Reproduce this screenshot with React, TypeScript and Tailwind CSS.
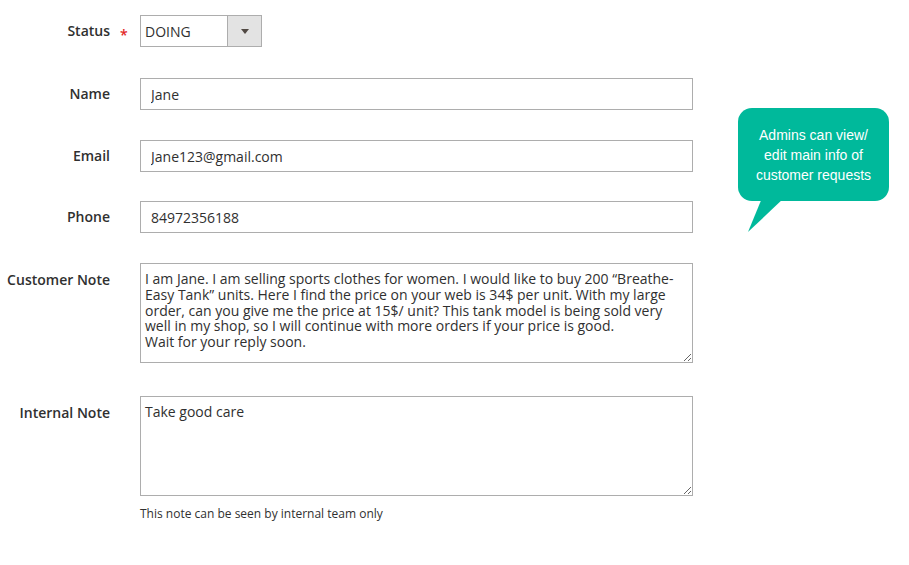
import React from "react";

const labelCls =
  "w-[110px] shrink-0 text-right text-[14px] font-semibold text-[#303030] leading-[20px]";
const inputCls =
  "h-[32px] w-[553px] border border-[#adadad] bg-white px-[10px] text-[14px] text-[#303030] outline-none";
const areaCls =
  "h-[100px] w-[553px] border border-[#adadad] bg-white px-[4px] pt-[7px] text-[14px] leading-[15.8px] text-[#303030] outline-none resize";

export default function App() {
  return (
    <div
      className="relative h-[565px] w-[909px] bg-white"
      style={{ fontFamily: '"Open Sans", sans-serif' }}
    >
      <div className="flex flex-col pt-[15px]">
        <div className="flex items-center">
          <div className={labelCls + " relative"}>
            Status
            <span className="absolute left-[120px] top-[4px] text-[14px] text-[#e22626]">*</span>
          </div>
          <div className="ml-[30px] flex h-[32px] w-[122px] border border-[#adadad] bg-white">
            <div className="flex flex-1 items-center pl-[4px] text-[14px] text-[#303030]">DOING</div>
            <div className="flex w-[34px] items-center justify-center border-l border-[#adadad] bg-[#e3e3e3]">
              <svg width="8" height="5" viewBox="0 0 8 5">
                <polygon points="0,0 8,0 4,5" fill="#514943" />
              </svg>
            </div>
          </div>
        </div>

        <div className="mt-[31px] flex items-center">
          <div className={labelCls}>Name</div>
          <input className={"ml-[30px] " + inputCls} defaultValue="Jane" />
        </div>

        <div className="mt-[30px] flex items-center">
          <div className={labelCls}>Email</div>
          <input className={"ml-[30px] " + inputCls} defaultValue="Jane123@gmail.com" />
        </div>

        <div className="mt-[29px] flex items-center">
          <div className={labelCls}>Phone</div>
          <input className={"ml-[30px] " + inputCls} defaultValue="84972356188" />
        </div>

        <div className="mt-[30px] flex items-start">
          <div className={labelCls + " pt-[7px]"}>Customer Note</div>
          <textarea
            className={"ml-[30px] " + areaCls}
            defaultValue={
              "I am Jane. I am selling sports clothes for women. I would like to buy 200 \u201cBreathe-Easy Tank\u201d units. Here I find the price on your web is 34$ per unit. With my large order, can you give me the price at 15$/ unit? This tank model is being sold very well in my shop, so I will continue with more orders if your price is good.\nWait for your reply soon."
            }
          />
        </div>

        <div className="mt-[33px] flex items-start">
          <div className={labelCls + " pt-[7px]"}>Internal Note</div>
          <div className="ml-[30px] flex flex-col">
            <textarea className={areaCls} defaultValue="Take good care" />
            <div className="mt-[10px] text-[12px] leading-[16px] text-[#303030]">
              This note can be seen by internal team only
            </div>
          </div>
        </div>
      </div>

      <div className="absolute left-[738px] top-[108px]">
        <div
          className="flex h-[93px] w-[151px] flex-col items-center justify-center rounded-[14px] bg-[#00b99b] text-center text-[14px] leading-[20px] text-white"
          style={{ fontFamily: '"Liberation Sans", Arial, sans-serif' }}
        >
          <div>Admins can view/</div>
          <div>edit main info of</div>
          <div>customer requests</div>
        </div>
        <svg className="absolute left-0 top-[90px]" width="50" height="36" viewBox="0 0 50 36">
          <polygon points="24,0 46,0 10,34" fill="#00b99b" />
        </svg>
      </div>
    </div>
  );
}
